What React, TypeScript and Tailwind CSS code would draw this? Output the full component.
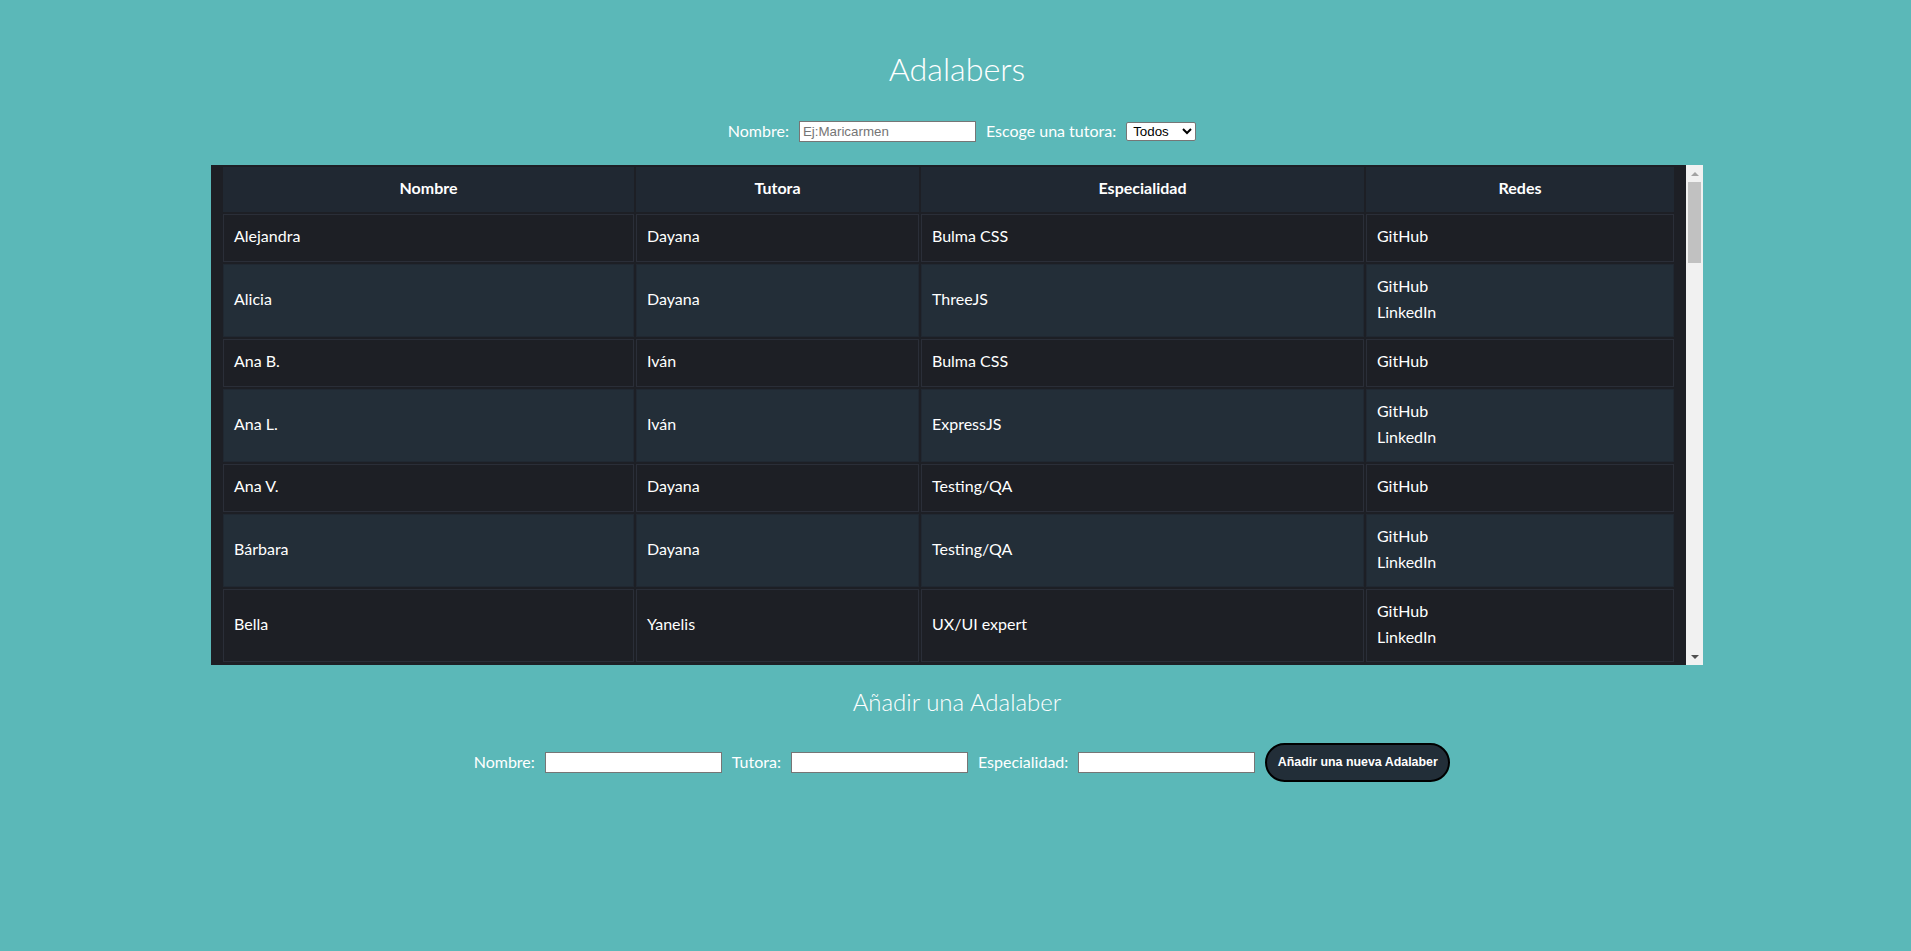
interface Adalaber {
    name: string;
    tutor: string;
    speciality: string;
    social: string[];
}

const adalabers: Adalaber[] = [
    { name: 'Alejandra', tutor: 'Dayana', speciality: 'Bulma CSS', social: ['GitHub'] },
    { name: 'Alicia', tutor: 'Dayana', speciality: 'ThreeJS', social: ['GitHub', 'LinkedIn'] },
    { name: 'Ana B.', tutor: 'Iván', speciality: 'Bulma CSS', social: ['GitHub'] },
    { name: 'Ana L.', tutor: 'Iván', speciality: 'ExpressJS', social: ['GitHub', 'LinkedIn'] },
    { name: 'Ana V.', tutor: 'Dayana', speciality: 'Testing/QA', social: ['GitHub'] },
    { name: 'Bárbara', tutor: 'Dayana', speciality: 'Testing/QA', social: ['GitHub', 'LinkedIn'] },
    { name: 'Bella', tutor: 'Yanelis', speciality: 'UX/UI expert', social: ['GitHub', 'LinkedIn'] },
];

const inputClass = "h-[21px] w-[177px] border border-[#767676] bg-white px-[3px] font-['Liberation_Sans',sans-serif] text-[13.33px] text-black placeholder:text-[#757575]";

export default function App() {
    return (
        <div className="min-h-[951px] bg-[#5bb8b8] font-['Lato',sans-serif] text-white">
            <h1 className="pt-[49px] pl-[3px] text-center text-[32.3px] leading-[40px] font-light">Adalabers</h1>

            <form className="mt-[32px] flex h-[21px] items-center justify-center pl-[13px] text-[16px]">
                <label className="mr-[10px] pb-[1px]">Nombre:</label>
                <input className={inputClass} placeholder="Ej:Maricarmen" />
                <label className="mr-[10px] ml-[10px] pb-[1px]">Escoge una tutora:</label>
                <select className="h-[19px] w-[70px] rounded-[2px] border border-[#767676] bg-white pl-[2px] font-['Liberation_Sans',sans-serif] text-[13.33px] text-black">
                    <option>Todos</option>
                </select>
            </form>

            <div className="mx-[211px] mt-[23px] flex h-[500px] w-[1492px]">
                <div className="flex-1 overflow-hidden bg-[#1d1f25] pl-[10px]">
                    <table className="w-[1455px] table-fixed border-separate border-spacing-x-[2px] border-spacing-y-[2px] text-[16px]">
                        <colgroup>
                            <col className="w-[411px]" />
                            <col className="w-[283px]" />
                            <col className="w-[443px]" />
                            <col className="w-[308px]" />
                        </colgroup>
                        <thead>
                            <tr>
                                {['Nombre', 'Tutora', 'Especialidad', 'Redes'].map((title) => (
                                    <th key={title} className="h-[45px] bg-[#202832] pb-[3px] font-bold">{title}</th>
                                ))}
                            </tr>
                        </thead>
                        <tbody>
                            {adalabers.map((person, index) => (
                                <Row key={person.name} person={person} striped={index % 2 === 1} />
                            ))}
                            <tr>
                                <td colSpan={4} className="h-[48px]" />
                            </tr>
                        </tbody>
                    </table>
                </div>

                <div className="flex w-[17px] flex-col items-center bg-[#f1f1f1]">
                    <div className="flex h-[17px] items-center justify-center">
                        <div className="h-0 w-0 border-x-[4px] border-b-[4px] border-x-transparent border-b-[#a3a3a3]" />
                    </div>
                    <div className="h-[81px] w-[13px] bg-[#c1c1c1]" />
                    <div className="flex-1" />
                    <div className="flex h-[17px] items-center justify-center">
                        <div className="h-0 w-0 border-x-[4px] border-t-[4px] border-x-transparent border-t-[#505050]" />
                    </div>
                </div>
            </div>

            <h2 className="mt-[22px] pl-[3px] text-center text-[24px] leading-[30px] font-light">Añadir una Adalaber</h2>

            <form className="mt-[26px] flex h-[39px] items-center justify-center pl-[13px] text-[16px]">
                <label className="mr-[10px] pb-[1px]">Nombre:</label>
                <input className={inputClass} />
                <label className="mr-[10px] ml-[10px] pb-[1px]">Tutora:</label>
                <input className={inputClass} />
                <label className="mr-[10px] ml-[10px] pb-[1px]">Especialidad:</label>
                <input className={inputClass} />
                <button type="button" className="ml-[10px] h-[39px] w-[185px] rounded-full border-2 border-black bg-[#222e38] font-['Liberation_Sans',sans-serif] text-[12.4px] font-bold text-white">
                    Añadir una nueva Adalaber
                </button>
            </form>
        </div>
    );
}

function Row({ person, striped }: { person: Adalaber; striped: boolean }) {
    const cell = striped
        ? 'border border-[#202832] bg-[#232e38] px-[10px] pt-[8px] pb-[12px] leading-[26px]'
        : 'border border-[#2a2e38] bg-[#1d1f25] px-[10px] pt-[8px] pb-[12px] leading-[26px]';

    return (
        <tr>
            <td className={cell}>{person.name}</td>
            <td className={cell}>{person.tutor}</td>
            <td className={cell}>{person.speciality}</td>
            <td className={cell}>
                {person.social.map((link) => (
                    <div key={link} className="leading-[25.5px]">{link}</div>
                ))}
            </td>
        </tr>
    );
}
